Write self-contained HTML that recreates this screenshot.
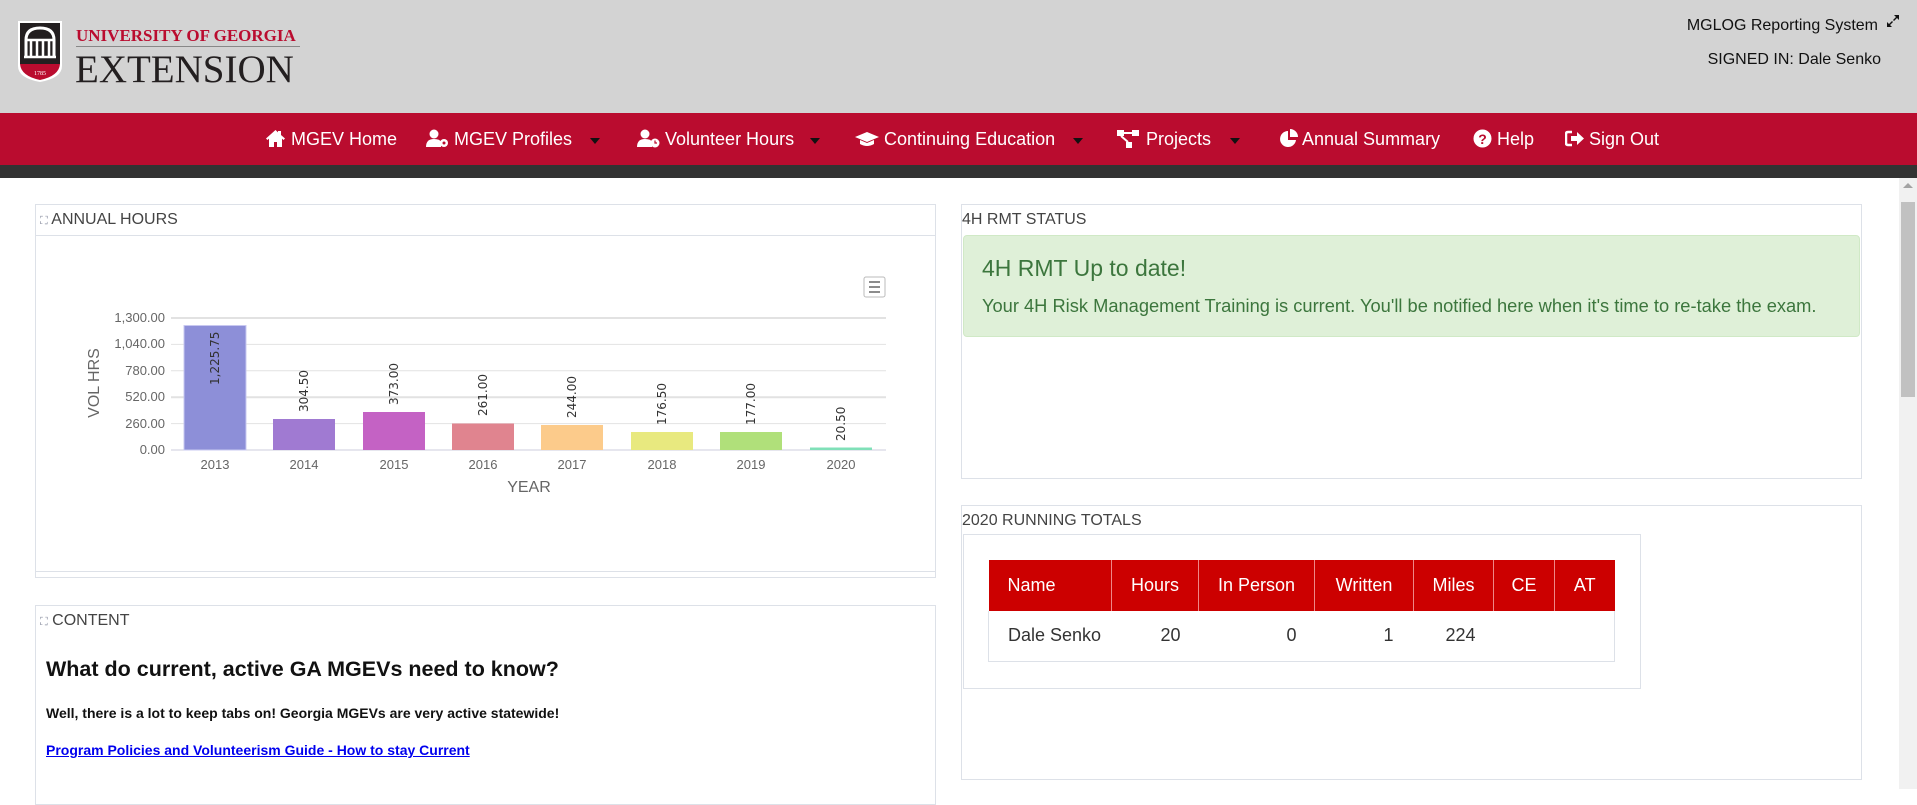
<!DOCTYPE html>
<html><head><meta charset="utf-8"><style>
*{margin:0;padding:0;box-sizing:border-box}
body{width:1917px;height:789px;overflow:hidden;background:#fff;font-family:"Liberation Sans",Arial,sans-serif;position:relative}
.a{position:absolute;white-space:nowrap}
.nav{font-size:18px;color:#fff;top:129px}
.car{position:absolute;top:138px;width:0;height:0;border-left:5px solid transparent;border-right:5px solid transparent;border-top:6px solid #111}
.panel{position:absolute;border:1px solid #dde1e8;background:#fff}
.ph{font-size:16px;color:#444;position:absolute;left:0;top:6px}
th,td{font-family:"Liberation Sans",sans-serif}
</style></head><body>
<div class="a" style="left:0;top:0;width:1917px;height:113px;background:#d3d3d3"></div>
<svg class="a" style="left:17px;top:20px" width="46" height="63" viewBox="0 0 46 63">
<path d="M1 1H45V46Q45 58 23 62Q1 58 1 46Z" fill="#fff"/>
<path d="M3 3H43V44H3Z" fill="#231f20"/>
<path d="M3 44H43Q42 56 23 60Q4 56 3 44Z" fill="#ba0c2f"/>
<path d="M9 38V20Q9 8 23 8Q37 8 37 20V38" fill="none" stroke="#fff" stroke-width="3"/>
<path d="M8 20H38M14 20V36M20 20V36M26 20V36M32 20V36M7 37H39" stroke="#fff" stroke-width="2.5"/>
<text x="23" y="55" font-size="6" fill="#fff" text-anchor="middle" font-family="Liberation Serif">1785</text>
</svg>
<div class="a" style="left:76px;top:26px;font-family:'Liberation Serif',serif;font-size:17px;font-weight:bold;color:#ba0c2f">UNIVERSITY OF GEORGIA</div>
<div class="a" style="left:76px;top:46px;width:224px;height:1px;background:#888"></div>
<div class="a" style="left:75px;top:47px;font-family:'Liberation Serif',serif;font-size:39px;color:#231f20">EXTENSION</div>
<div class="a" style="right:39px;top:17px;font-size:16px;color:#111">MGLOG Reporting System</div>
<svg class="a" style="left:1886px;top:14px" width="14" height="14" viewBox="0 0 14 14"><path d="M8 1H13V6L11 4 8 7 7 6 10 3ZM6 13H1V8L3 10 6 7 7 8 4 11Z" fill="#111"/></svg>
<div class="a" style="right:36px;top:51px;font-size:16px;color:#111">SIGNED IN: Dale Senko</div>
<div class="a" style="left:0;top:113px;width:1917px;height:52px;background:#ba0c2f"></div>
<div class="a" style="left:0;top:165px;width:1917px;height:13px;background:#333"></div>
<svg class="a" style="left:265px;top:129px" width="21" height="19" viewBox="0 0 21 19"><path d="M10.5 1L1 9.5 2.5 11 4 9.6V18h5v-5h3v5h5V9.6L18.5 11 20 9.5 16 6V2h-3v1.4z" fill="#fff"/></svg>
<div class="a nav" style="left:291px">MGEV Home</div>
<svg class="a" style="left:425px;top:129px" width="24" height="19" viewBox="0 0 24 19"><circle cx="9" cy="5" r="4.5" fill="#fff"/><path d="M1 18Q1 10 9 10Q15 10 16 13V18Z" fill="#fff"/><circle cx="19" cy="14" r="4" fill="#fff"/><circle cx="19" cy="14" r="1.5" fill="#ba0c2f"/></svg>
<div class="a nav" style="left:454px">MGEV Profiles</div>
<div class="car" style="left:590px"></div>
<svg class="a" style="left:636px;top:129px" width="24" height="19" viewBox="0 0 24 19"><circle cx="9" cy="5" r="4.5" fill="#fff"/><path d="M1 18Q1 10 9 10Q15 10 16 13V18Z" fill="#fff"/><circle cx="19" cy="14" r="4.5" fill="#fff"/><path d="M19 11.5V14H21" stroke="#ba0c2f" stroke-width="1.2" fill="none"/></svg>
<div class="a nav" style="left:665px">Volunteer Hours</div>
<div class="car" style="left:810px"></div>
<svg class="a" style="left:855px;top:131px" width="24" height="16" viewBox="0 0 24 16"><path d="M12 1L0 6l12 5 12-5z" fill="#fff"/><path d="M5 9v4q7 4 14 0V9l-7 3z" fill="#fff"/></svg>
<div class="a nav" style="left:884px">Continuing Education</div>
<div class="car" style="left:1073px"></div>
<svg class="a" style="left:1117px;top:130px" width="22" height="18" viewBox="0 0 22 18"><rect x="0" y="0" width="7" height="6" fill="#fff"/><rect x="15" y="0" width="7" height="6" fill="#fff"/><rect x="9" y="12" width="6" height="6" fill="#fff"/><path d="M7 3H15M4 6L11 12" stroke="#fff" stroke-width="2"/></svg>
<div class="a nav" style="left:1146px">Projects</div>
<div class="car" style="left:1230px"></div>
<svg class="a" style="left:1279px;top:129px" width="20" height="20" viewBox="0 0 20 20"><path d="M9 2A8 8 0 1 0 17 11H9Z" fill="#fff"/><path d="M11 0A8 8 0 0 1 19 8H11Z" fill="#fff"/></svg>
<div class="a nav" style="left:1302px">Annual Summary</div>
<svg class="a" style="left:1473px;top:129px" width="19" height="19" viewBox="0 0 19 19"><circle cx="9.5" cy="9.5" r="9" fill="#fff"/><text x="9.5" y="15" font-size="14" font-weight="bold" fill="#ba0c2f" text-anchor="middle" font-family="Liberation Sans">?</text></svg>
<div class="a nav" style="left:1497px">Help</div>
<svg class="a" style="left:1565px;top:130px" width="20" height="17" viewBox="0 0 20 17"><path d="M7 2H3Q1 2 1 4V13Q1 15 3 15H7" stroke="#fff" stroke-width="2.5" fill="none"/><path d="M6 6H12V2L19 8.5 12 15V11H6Z" fill="#fff"/></svg>
<div class="a nav" style="left:1589px">Sign Out</div>
<div class="a" style="left:1899px;top:178px;width:18px;height:611px;background:#f1f1f1"></div>
<div class="a" style="left:1901px;top:202px;width:14px;height:195px;background:#c1c1c1"></div>
<div class="a" style="left:1903px;top:183px;width:0;height:0;border-left:5px solid transparent;border-right:5px solid transparent;border-bottom:5px solid #a3a3a3"></div>
<div class="panel" style="left:35px;top:204px;width:901px;height:374px">
<div style="position:absolute;left:0;right:0;top:30px;height:1px;background:#dde1e8"></div>
<div style="position:absolute;left:0;right:0;top:366px;height:1px;background:#dde1e8"></div>
<div class="ph" style="left:4px"><span style="font-size:11px;color:#8a8fa0">&#x26F6;</span> ANNUAL HOURS</div>
</div>
<svg class="a" style="left:0;top:0" width="950" height="580">
<g stroke="#e2e2e2" stroke-width="1">
<line x1="171" x2="886" y1="318" y2="318" stroke-width="2"/><line x1="171" x2="886" y1="344.4" y2="344.4"/><line x1="171" x2="886" y1="370.8" y2="370.8"/><line x1="171" x2="886" y1="397.2" y2="397.2" stroke-width="2"/><line x1="171" x2="886" y1="423.6" y2="423.6"/><line x1="171" x2="886" y1="450" y2="450" stroke="#ccd"/>
</g>
<g font-family="Liberation Sans" font-size="13" fill="#666" text-anchor="end">
<text x="165" y="322">1,300.00</text><text x="165" y="348">1,040.00</text><text x="165" y="375">780.00</text><text x="165" y="401">520.00</text><text x="165" y="428">260.00</text><text x="165" y="454">0.00</text>
</g>
<g font-family="Liberation Sans" font-size="13" fill="#666" text-anchor="middle">
<text x="215" y="469">2013</text><text x="304" y="469">2014</text><text x="394" y="469">2015</text><text x="483" y="469">2016</text><text x="572" y="469">2017</text><text x="662" y="469">2018</text><text x="751" y="469">2019</text><text x="841" y="469">2020</text>
<text x="529" y="492" font-size="16">YEAR</text>
<text transform="translate(99,383) rotate(-90)" font-size="16">VOL HRS</text>
</g>
<rect x="184" y="325.5" width="62" height="124.5" fill="#8d8fd8" stroke="#c8c8f0"/>
<rect x="273" y="419" width="62" height="31" fill="#a07ad2"/>
<rect x="363" y="412" width="62" height="38" fill="#c462c4"/>
<rect x="452" y="423.5" width="62" height="26.5" fill="#e0848f"/>
<rect x="541" y="425" width="62" height="25" fill="#fccb8b"/>
<rect x="631" y="432" width="62" height="18" fill="#e8e97f"/>
<rect x="720" y="432" width="62" height="18" fill="#b0e07a"/>
<rect x="810" y="447.5" width="62" height="2.5" fill="#80e0b8"/>
<g font-family="DejaVu Sans" font-size="12" fill="#333">
<text transform="translate(219,385) rotate(-90)">1,225.75</text>
<text transform="translate(308,412) rotate(-90)">304.50</text>
<text transform="translate(398,405) rotate(-90)">373.00</text>
<text transform="translate(487,416) rotate(-90)">261.00</text>
<text transform="translate(576,418) rotate(-90)">244.00</text>
<text transform="translate(666,425) rotate(-90)">176.50</text>
<text transform="translate(755,425) rotate(-90)">177.00</text>
<text transform="translate(845,441) rotate(-90)">20.50</text>
</g>
<rect x="864" y="277" width="21" height="20" rx="2" fill="#fff" stroke="#bbb"/>
<path d="M869 282H880M869 287H880M869 292H880" stroke="#666" stroke-width="1.5"/>
</svg>
<div class="panel" style="left:35px;top:605px;width:901px;height:200px">
<div class="ph" style="left:4px;top:6px"><span style="font-size:11px;color:#8a8fa0">&#x26F6;</span> CONTENT</div>
</div>
<div class="a" style="left:46px;top:657px;font-size:21.5px;font-weight:bold;color:#111">What do current, active GA MGEVs need to know?</div>
<div class="a" style="left:46px;top:705px;font-size:14px;font-weight:bold;color:#111">Well, there is a lot to keep tabs on! Georgia MGEVs are very active statewide!</div>
<div class="a" style="left:46px;top:742px;font-size:14px;font-weight:bold;color:#00e;text-decoration:underline">Program Policies and Volunteerism Guide - How to stay Current</div>
<div class="panel" style="left:961px;top:204px;width:901px;height:275px">
<div class="ph">4H RMT STATUS</div>
<div style="position:absolute;left:1px;top:30px;width:897px;height:102px;background:#dff0d8;border:1px solid #d0e9c6;border-radius:4px"></div>
<div style="position:absolute;left:20px;top:50px;font-size:23px;color:#3c763d">4H RMT Up to date!</div>
<div style="position:absolute;left:20px;top:90px;font-size:18.3px;color:#3c763d">Your 4H Risk Management Training is current. You'll be notified here when it's time to re-take the exam.</div>
</div>
<div class="panel" style="left:961px;top:505px;width:901px;height:275px">
<div class="ph">2020 RUNNING TOTALS</div>
</div>
<div class="a" style="left:963px;top:534px;width:678px;height:155px;border:1px solid #dde1e8"></div>
<table class="a" style="left:988px;top:560px;border-collapse:collapse;font-size:18px">
<tr style="background:#cc0000;color:#fff;height:51px">
<th style="width:123px;text-align:left;padding-left:19px;font-weight:normal">Name</th>
<th style="width:87px;border-left:1px solid #e88;font-weight:normal">Hours</th>
<th style="width:116px;border-left:1px solid #e88;font-weight:normal">In Person</th>
<th style="width:99px;border-left:1px solid #e88;font-weight:normal">Written</th>
<th style="width:80px;border-left:1px solid #e88;font-weight:normal">Miles</th>
<th style="width:61px;border-left:1px solid #e88;font-weight:normal">CE</th>
<th style="width:60px;border-left:1px solid #e88;font-weight:normal">AT</th>
</tr>
<tr style="height:50px;color:#333;border:1px solid #dde1e8;border-top:none">
<td style="padding-left:19px">Dale Senko</td><td style="text-align:right;padding-right:18px">20</td><td style="text-align:right;padding-right:18px">0</td><td style="text-align:right;padding-right:20px">1</td><td style="text-align:right;padding-right:18px">224</td><td></td><td></td>
</tr>
</table>
</body></html>
